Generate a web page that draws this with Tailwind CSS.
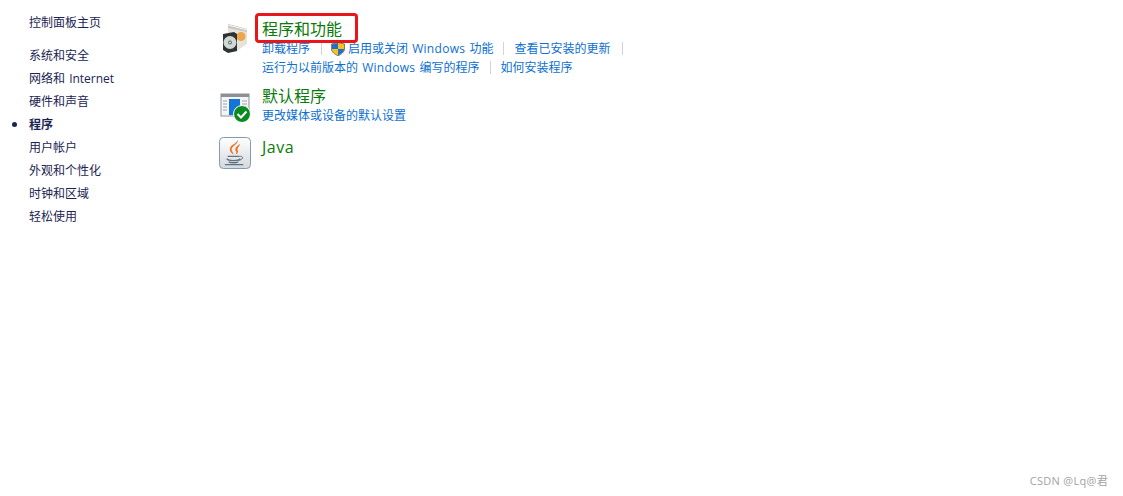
<!DOCTYPE html>
<html lang="zh-CN">
<head>
  <meta charset="UTF-8">
  <title>程序</title>
  <script src="https://cdn.jsdelivr.net/npm/@tailwindcss/browser@4"></script>
</head>
<body class="bg-white w-[1123px] h-[496px] overflow-hidden relative font-['Open_Sans','Noto_Sans_CJK_SC',sans-serif]">
  <div class="flex">
    <!-- Left nav -->
    <nav class="w-[219px] shrink-0 pt-[11px] pl-[29px] text-[12px] leading-[23px] text-[#1a2452]">
      <div class="mb-[10px]">控制面板主页</div>
      <div>系统和安全</div>
      <div>网络和 <span class="ml-px">Internet</span></div>
      <div>硬件和声音</div>
      <div class="relative font-bold">
        <span class="absolute left-[-17px] top-[9px] w-[5px] h-[5px] rounded-full bg-[#1a2452]"></span>
        程序
      </div>
      <div>用户帐户</div>
      <div>外观和个性化</div>
      <div>时钟和区域</div>
      <div>轻松使用</div>
    </nav>

    <!-- Categories -->
    <main class="pt-[18px] flex flex-col">
      <section class="flex h-[68px]">
        <svg class="w-[32px] h-[32px] mt-[5px] mr-[11px] shrink-0" viewBox="0 0 32 32">
          <path d="M9 1 L28 6 L28 21 L16 29 L9 25 Z" fill="#e6e3da"/>
          <path d="M9 1 L28 6 L28 9 L9 5 Z" fill="#c9c7c1"/>
          <path d="M9 2 L28 7" stroke="#f7f6f3"/>
          <circle cx="22" cy="13.5" r="4.5" fill="#eda64a"/>
          <path d="M4 11 L15 9 L18 11 L18 28 L9 30 L4 27 Z" fill="#2f3334"/>
          <circle cx="11" cy="19.5" r="6.5" fill="#cfd8d4"/>
          <circle cx="11" cy="19.5" r="2" fill="#6f7572"/>
          <circle cx="11" cy="19.5" r="0.8" fill="#fff"/>
        </svg>
        <div class="relative">
          <h2 class="text-[16px] leading-[22px] text-[#0a7a0a]">程序和功能</h2>
          <span class="absolute left-[-7px] top-[-5px] w-[103px] h-[30px] border-[3px] border-[#e8161b] rounded-[4px]"></span>
          <div class="flex items-center text-[12px] leading-[19px] text-[#0d6fd0] mt-[-1px]">
            <a>卸载程序</a>
            <span class="w-px h-[13px] bg-[#d0d4d8] ml-[11px] mr-[9px]"></span>
            <svg class="w-[14px] h-[14px] mr-[3px]" viewBox="0 0 14 14">
              <path d="M7 0.5 L13.5 2 L13.5 7 C13.5 10 10 12.5 7 13.8 C4 12.5 0.5 10 0.5 7 L0.5 2 Z" fill="#f5c21b" stroke="#5c6670" stroke-width="0.8"/>
              <path d="M7 1 L7 7 L1 7 L1 2.4 Z" fill="#1f6fd0"/>
              <path d="M7 7 L13 7 C13 9.8 10 12 7 13.2 Z" fill="#1f6fd0"/>
            </svg>
            <a>启用或关闭 <span class="ml-px tracking-[0.3px]">Windows</span> <span class="ml-px">功能</span></a>
            <span class="w-px h-[13px] bg-[#d0d4d8] mx-[10px]"></span>
            <a>查看已安装的更新</a>
            <span class="w-px h-[13px] bg-[#d0d4d8] ml-[12px]"></span>
          </div>
          <div class="flex items-center text-[12px] leading-[19px] text-[#0d6fd0]">
            <a>运行为以前版本的 <span class="ml-px tracking-[0.3px]">Windows</span> <span class="ml-px">编写的程序</span></a>
            <span class="w-px h-[13px] bg-[#d0d4d8] ml-[11px] mr-[9px]"></span>
            <a>如何安装程序</a>
          </div>
        </div>
      </section>

      <section class="flex h-[51px]">
        <svg class="w-[32px] h-[32px] mt-[5px] mr-[11px] shrink-0" viewBox="0 0 32 32">
          <rect x="2" y="3" width="28" height="22" fill="#f4f5f6" stroke="#8d9195"/>
          <rect x="2" y="3" width="28" height="3" fill="#8d9195"/>
          <rect x="10" y="8" width="11" height="16" fill="#1574d8"/>
          <path d="M4 10h4M4 13h4M4 16h4M4 19h4M23 10h5M23 13h5M23 16h5" stroke="#a0a4a8"/>
          <circle cx="23" cy="23" r="8.5" fill="#0b8a1f" stroke="#fff"/>
          <path d="M18.5 23 L22 26.5 L27.5 20.5" fill="none" stroke="#fff" stroke-width="2"/>
        </svg>
        <div class="mt-[-1px]">
          <h2 class="text-[16px] leading-[22px] text-[#0a7a0a]">默认程序</h2>
          <a class="block text-[12px] leading-[16px] mt-px text-[#0d6fd0]">更改媒体或设备的默认设置</a>
        </div>
      </section>

      <section class="flex">
        <svg class="w-[32px] h-[32px] mr-[11px] shrink-0" viewBox="0 0 33 33">
          <defs>
            <linearGradient id="javaBg" x1="0" y1="0" x2="0" y2="1">
              <stop offset="0" stop-color="#ffffff"/>
              <stop offset="1" stop-color="#d5d9dc"/>
            </linearGradient>
          </defs>
          <rect x="0.5" y="0.5" width="32" height="32" rx="4" fill="url(#javaBg)" stroke="#7f98ad"/>
          <path d="M19 3 C21 7 13 9 13 13 C13 15 15 16 15 18 C12 16 10 14 12 10 C14 7 18 7 19 3 Z" fill="#e8762c"/>
          <path d="M22 7 C19 9 16 11 17 14 C18 15 18 17 17 18 C20 17 20 15 19 13 C19 11 21 10 22 7 Z" fill="#e8762c"/>
          <path d="M9 20 H21 M8 22.5 C10 25 20 25 22 22.5 M10 25.5 C12 27 18 27 20 25.5 M6 28.5 H25" fill="none" stroke="#5f7484" stroke-width="1.5"/>
          <path d="M21 20 C26 19 25 24 20 24" fill="none" stroke="#5f7484"/>
        </svg>
        <h2 class="text-[16px] leading-[22px] tracking-[0.5px] text-[#0a7a0a] mt-[-1px]">Java</h2>
      </section>
    </main>
  </div>

  <div class="absolute right-[15px] top-[473px] text-[11px] tracking-[0.3px] leading-[16px] text-[#a3a3a3]">CSDN @Lq@君</div>
</body>
</html>
